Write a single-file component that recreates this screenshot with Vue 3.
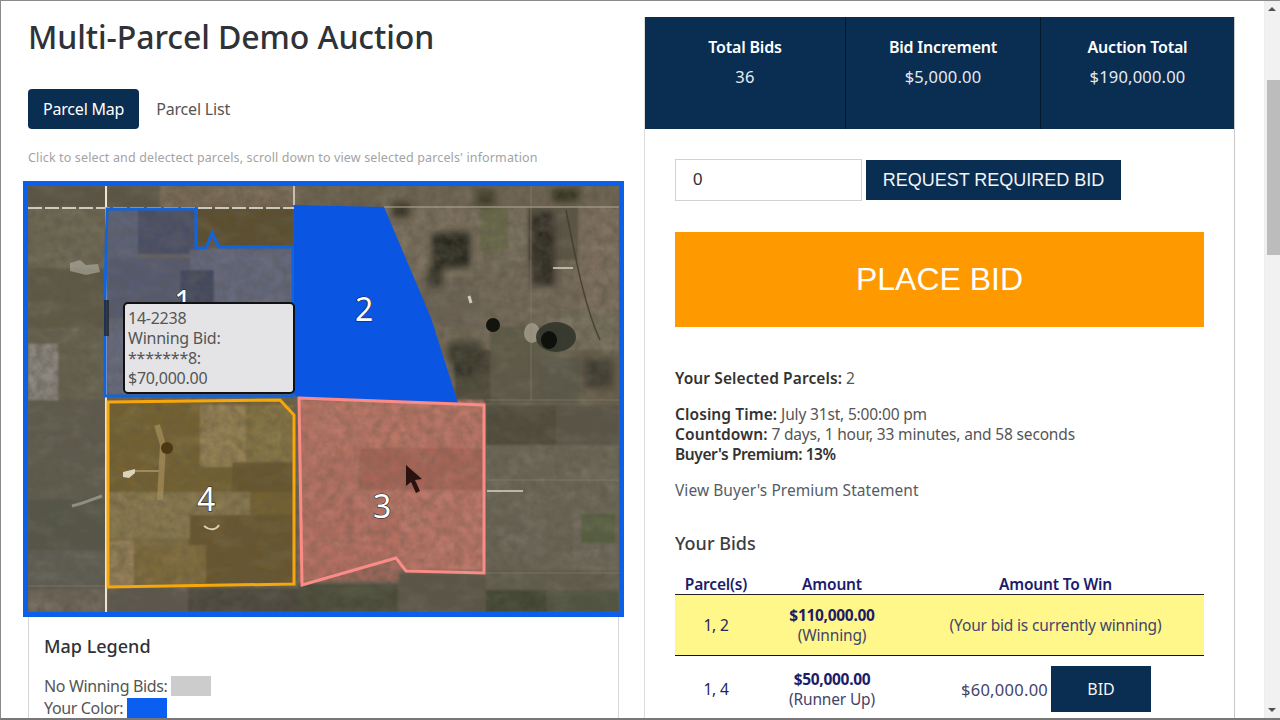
<script setup>
const fields = [
  // left strip
  [28,186,78,21,'#5b5445'],[28,208,78,60,'#6e6753'],[28,268,78,60,'#5f5a45'],[28,328,78,72,'#66624f'],
  [28,344,30,56,'#8b8780'],[28,400,78,100,'#5e5b4f'],[28,500,78,50,'#55564a'],[28,550,78,40,'#615e54'],[28,590,78,22,'#6d6559'],
  // top strip
  [108,186,88,21,'#5c5444'],[160,186,134,21,'#7a6b55'],[296,186,90,19,'#6d6350'],
  // parcel 1 notch
  [197,208,97,40,'#5b4f2f'],
  // below parcel row
  [108,588,80,24,'#5d5850'],[188,588,110,24,'#4b473c'],[298,584,100,28,'#4a4c38'],[398,574,90,38,'#5c5648'],
  // top right
  [384,186,235,21,'#6f6552'],[384,207,100,70,'#7c6f5e'],[480,207,28,44,'#6a6a4c'],[508,207,20,60,'#7a7060'],[528,207,50,70,'#5b5544'],[578,207,41,120,'#7f705f'],
  [400,277,80,50,'#6d6454'],[480,260,100,66,'#756b5a'],[430,327,60,60,'#766c5a'],[490,327,70,30,'#605c48'],[560,310,59,40,'#786f5e'],
  [490,357,50,46,'#5f5a49'],[540,357,40,46,'#5c5a4c'],[580,350,39,53,'#6a604e'],[455,350,35,53,'#4f4c3b'],
  // bottom right
  [486,405,70,40,'#4f4b3b'],[556,405,63,40,'#5a5446'],[486,445,133,70,'#6c6759'],[486,515,50,55,'#6a6557'],
  [536,515,45,55,'#6d6658'],[581,514,34,29,'#56603f'],[581,543,38,27,'#6f6a5c'],[486,570,133,42,'#635f4f'],[486,590,60,22,'#3f4433'],[546,590,73,22,'#50533f']
]
const parcel4 = [
  [108,402,186,184,'#6a5c36'],[200,405,46,62,'#8c7d5a'],[246,405,48,70,'#7d7048'],[108,492,142,46,'#7f7554'],[108,538,80,16,'#736a49'],
  [190,515,104,70,'#5c5030'],[108,541,26,45,'#8c7c5e'],[136,545,70,40,'#75663f'],[232,462,62,30,'#5c5030']
]
const parcel3 = [
  [299,400,185,60,'#a87060'],[299,455,60,60,'#a06b5c'],[360,448,124,45,'#925c4f'],[359,490,125,80,'#a87063'],[299,515,100,66,'#a2695c']
]
const parcel1 = [
  [108,209,30,60,'#5c6272'],[138,209,58,45,'#3f4556'],[108,258,90,60,'#525766'],[190,250,104,80,'#686b78'],[180,270,34,34,'#343a4a'],[108,320,20,74,'#6a6d79']
]
const dark = [
  [432,232,38,36,'#26251b'],[428,268,14,18,'#2f2d22'],[531,212,24,74,'#2d2b20'],[448,340,34,24,'#3a382b'],
  [454,360,22,16,'#33312a'],[552,188,28,14,'#33301f'],[392,203,18,14,'#2f2c1f'],[475,190,20,16,'#3a3727'],
  [462,352,26,18,'#3a382c'],[583,358,30,30,'#3f3c30']
]
</script>

<template>
  <div class="window">
    <main class="page">
      <section class="left">
        <h1 class="title">Multi-Parcel Demo Auction</h1>
        <nav class="tabs">
          <a class="tab active">Parcel Map</a>
          <a class="tab">Parcel List</a>
        </nav>
        <p class="hint">Click to select and delectect parcels, scroll down to view selected parcels' information</p>
        <div class="map">
          <svg class="map-svg" viewBox="28 186 591 426" width="591" height="426" xmlns="http://www.w3.org/2000/svg">
            <defs>
              <filter id="soft"><feGaussianBlur stdDeviation="1.2" /></filter>
              <filter id="blotch"><feGaussianBlur stdDeviation="3.5" /></filter>
              <filter id="grain" x="0" y="0" width="100%" height="100%">
                <feTurbulence type="fractalNoise" baseFrequency="0.11" numOctaves="4" seed="7" />
                <feColorMatrix type="matrix" values="0 0 0 0 0.1  0 0 0 0 0.09  0 0 0 0 0.06  0.9 0.9 0 0 -0.6" />
              </filter>
              <filter id="grain2" x="0" y="0" width="100%" height="100%">
                <feTurbulence type="fractalNoise" baseFrequency="0.035 0.06" numOctaves="3" seed="21" />
                <feColorMatrix type="matrix" values="0 0 0 0 0.85  0 0 0 0 0.8  0 0 0 0 0.7  1.1 0 0 0 -0.5" />
              </filter>
            </defs>
            <rect x="28" y="186" width="591" height="426" fill="#6c6452" />
            <g filter="url(#soft)">
              <rect v-for="(f, i) in fields" :key="'f' + i" :x="f[0]" :y="f[1]" :width="f[2]" :height="f[3]" :fill="f[4]" />
              <rect v-for="(f, i) in parcel4" :key="'p4' + i" :x="f[0]" :y="f[1]" :width="f[2]" :height="f[3]" :fill="f[4]" />
              <rect v-for="(f, i) in parcel3" :key="'p3' + i" :x="f[0]" :y="f[1]" :width="f[2]" :height="f[3]" :fill="f[4]" />
              <rect v-for="(f, i) in parcel1" :key="'p1' + i" :x="f[0]" :y="f[1]" :width="f[2]" :height="f[3]" :fill="f[4]" />
            </g>
            <g filter="url(#blotch)">
              <rect v-for="(f, i) in dark" :key="'d' + i" :x="f[0]" :y="f[1]" :width="f[2]" :height="f[3]" :fill="f[4]" />
            </g>
            <rect x="28" y="186" width="591" height="426" filter="url(#grain2)" opacity="0.2" />
            <rect x="28" y="186" width="591" height="426" filter="url(#grain)" opacity="0.75" />

            <!-- ponds and farmyards -->
            <ellipse cx="532" cy="333" rx="8" ry="10" fill="#a89f8c" opacity="0.8" />
            <ellipse cx="556" cy="337" rx="20" ry="15" fill="#33352b" opacity="0.9" />
            <ellipse cx="493" cy="325" rx="7" ry="7" fill="#14140e" />
            <ellipse cx="549" cy="340" rx="8" ry="9" fill="#0e100c" />
            <path d="M70 263l10-3 6 5 12-1 2 8-14 3-16-4z" fill="#c4c1b6" opacity="0.5" />
            <path d="M123 472l12-3v4l-6 5-6-1z" fill="#e0ddd2" opacity="0.95" />
            <path d="M135 471h24" stroke="#a39877" stroke-width="1.5" />
            <path d="M157 425l6 20-3 55" stroke="#a8946a" stroke-width="6" fill="none" opacity="0.6" />
            <ellipse cx="167" cy="448" rx="6" ry="6" fill="#3f3014" />
            <path d="M72 506c10-2 24-8 30-10" stroke="#a8a594" stroke-width="3" fill="none" opacity="0.7" />
            <path d="M204 526c6 5 12 4 15-1" stroke="#d8d2bd" stroke-width="2" fill="none" />
            <path d="M28 586H105M486 573H619M486 400H619M531 186V400M486 480H619" stroke="#8b8474" stroke-width="1" fill="none" opacity="0.55" />
            <path d="M384 207H619" stroke="#a79f8d" stroke-width="1.5" opacity="0.8" />
            <path d="M566 210c8 40 18 96 34 130" stroke="#3f3a2b" stroke-width="1.5" fill="none" opacity="0.8" />
            <path d="M487 491h36M553 268h20" stroke="#d5d2c6" stroke-width="2" fill="none" opacity="0.75" />
            <path d="M469 296l2 7" stroke="#e8e4d8" stroke-width="3" opacity="0.8" />

            <!-- roads -->
            <path d="M106 186V612" stroke="#efe2d2" stroke-width="2" />
            <path d="M294 186V205" stroke="#e0dbcf" stroke-width="1.5" />
            <path d="M28 208H294" stroke="#e0dccf" stroke-width="2" stroke-dasharray="14 3" opacity="0.85" />

            <!-- parcels -->
            <path d="M107 209H196V248H206L212 233L219 247H293V396H105V300Z" fill="#5c6488" fill-opacity="0.3" stroke="#1264dd" stroke-width="3" stroke-linejoin="miter" />
            <path d="M294 205L384 207L431 318L458 403L298 398L294 394Z" fill="#0b55e3" />
            <path d="M108 402L280 400L294 415V584L108 587Z" fill="#ffa500" fill-opacity="0.07" stroke="#f7a70a" stroke-width="3" />
            <path d="M299 398L484 405V573L406 571L396 558L302 585Z" fill="#ff8678" fill-opacity="0.2" stroke="#fb8b86" stroke-width="3" />

            <rect x="104" y="300" width="5" height="36" fill="#22262e" opacity="0.8" />

            <!-- parcel numbers -->
            <g class="labels">
              <text x="183" y="314">1</text>
              <text x="364" y="321">2</text>
              <text x="382" y="518">3</text>
              <text x="206" y="511">4</text>
            </g>

            <!-- pointer -->
            <path d="M406 465L406 486L411 482L416 493L420 491L415 480L422 479Z" fill="#2a130e" />
          </svg>
          <div class="tooltip">14-2238<br />Winning Bid:<br />*******8:<br />$70,000.00</div>
        </div>
        <section class="legend">
          <h3 class="legend-title">Map Legend</h3>
          <div class="legend-row">No Winning Bids: <span class="swatch grey"></span></div>
          <div class="legend-row">Your Color: <span class="swatch blue"></span></div>
        </section>
      </section>

      <section class="right">
        <div class="stats">
          <div class="stat w1"><strong>Total Bids</strong><span>36</span></div>
          <div class="stat w2"><strong>Bid Increment</strong><span>$5,000.00</span></div>
          <div class="stat w3"><strong>Auction Total</strong><span>$190,000.00</span></div>
        </div>
        <div class="body">
          <div class="request">
            <div class="input">0</div>
            <button class="req-btn">REQUEST REQUIRED BID</button>
          </div>
          <button class="place">PLACE BID</button>
          <p class="selected"><b>Your Selected Parcels:</b> 2</p>
          <p class="info">
            <b>Closing Time:</b> July 31st, 5:00:00 pm<br />
            <b>Countdown:</b> 7 days, 1 hour, 33 minutes, and 58 seconds<br />
            <b class="premium">Buyer's Premium: 13%</b>
          </p>
          <a class="statement">View Buyer's Premium Statement</a>
          <h3 class="bids-title">Your Bids</h3>
          <div class="bids">
            <div class="bid-row head">
              <div>Parcel(s)</div><div>Amount</div><div>Amount To Win</div>
            </div>
            <div class="bid-row winning">
              <div>1, 2</div>
              <div class="amount"><b>$110,000.00</b><span>(Winning)</span></div>
              <div class="plain">(Your bid is currently winning)</div>
            </div>
            <div class="bid-row runner">
              <div>1, 4</div>
              <div class="amount"><b>$50,000.00</b><span>(Runner Up)</span></div>
              <div class="towin"><span>$60,000.00</span><button class="bid-btn">BID</button></div>
            </div>
          </div>
        </div>
      </section>
    </main>
    <aside class="scrollbar">
      <span class="arrow up"></span>
      <span class="thumb"></span>
      <span class="arrow down"></span>
    </aside>
  </div>
</template>

<style>
html, body { margin: 0; background: #fff; overflow: hidden; }
</style>

<style scoped>
.window {
  width: 1280px;
  height: 720px;
  box-sizing: border-box;
  display: flex;
  overflow: hidden;
  background: #fff;
  border-top: 1px solid #8a8a8a;
  border-bottom: 2px solid #777;
  border-left: 1px solid #8a8a8a;
  font-family: "Noto Sans", "Open Sans", sans-serif;
  color: #555;
  font-size: 15.5px;
  letter-spacing: -0.17px;
}
.page {
  flex: 1;
  min-width: 0;
  display: flex;
  align-items: flex-start;
  height: 717px;
  overflow: hidden;
}
.left {
  width: 643px;
  flex: none;
  padding: 0 0 0 27px;
  box-sizing: border-box;
}
.title {
  margin: 16px 0 0;
  font-size: 32px;
  line-height: 40px;
  font-weight: 500;
  color: #2f3237;
  letter-spacing: -0.08px;
}
.tabs {
  display: flex;
  margin-top: 32px;
  gap: 2px;
}
.tab {
  padding: 0 15px;
  height: 40px;
  display: flex;
  align-items: center;
  font-size: 16px;
  border-radius: 4px;
  color: #555;
  letter-spacing: -0.2px;
}
.tab.active {
  background: #0a2d52;
  color: #fff;
}
.hint {
  margin: 20px 0 0;
  font-size: 12.5px;
  line-height: 18px;
  color: #a3a3a3;
  letter-spacing: 0.14px;
}
.map {
  position: relative;
  margin: 14px 0 0 -5px;
  width: 591px;
  height: 426px;
  border: 5px solid #0b5fe8;
}
.map-svg {
  display: block;
}
.labels text {
  font-family: "Noto Sans", sans-serif;
  font-size: 32px;
  fill: #fff;
  text-anchor: middle;
  stroke: #222;
  stroke-width: 1.2px;
  paint-order: stroke;
}
.tooltip {
  position: absolute;
  left: 95px;
  top: 116px;
  width: 172px;
  height: 92px;
  box-sizing: border-box;
  padding: 4px 3px;
  background: #e4e4e6;
  border: 2px solid #111;
  border-radius: 5px;
  font-size: 16px;
  line-height: 20px;
  color: #555;
  letter-spacing: -0.25px;
}
.legend {
  width: 591px;
  height: 110px;
  box-sizing: border-box;
  padding: 16px 15px;
  border: 1px solid #d6d6dc;
  border-top: none;
}
.legend-title {
  margin: 0;
  font-size: 18px;
  line-height: 26px;
  font-weight: 500;
  color: #2f3237;
  letter-spacing: 0;
}
.legend-row {
  display: flex;
  align-items: center;
  gap: 3px;
  height: 22px;
  font-size: 16px;
  color: #555;
  letter-spacing: -0.35px;
}
.legend-row:first-of-type {
  margin-top: 16px;
}
.swatch {
  width: 40px;
  height: 20px;
}
.grey { background: #cccccc; }
.blue { background: #0a5ff0; margin-left: 1px; }

.right {
  width: 591px;
  flex: none;
  box-sizing: border-box;
  margin-top: 16px;
  height: 701px;
  border-right: 1px solid #c9c9c9;
  border-left: 1px solid #dcdcdc;
}
.stats {
  display: flex;
  height: 112px;
  background: #0a2d52;
  color: #fff;
}
.stat {
  display: flex;
  flex-direction: column;
  align-items: center;
  padding-top: 20px;
  box-sizing: border-box;
  line-height: 20px;
  gap: 10px;
  color: #e6ebf0;
}
.stat strong {
  font-size: 16px;
  font-weight: 600;
  color: #fff;
  letter-spacing: -0.2px;
}
.stat span {
  font-size: 16.5px;
  letter-spacing: 0.2px;
}
.w1, .w2 { border-right: 1px solid #04182e; }
.w1 { width: 201px; }
.w2 { width: 195px; }
.w3 { flex: 1; }
.body {
  padding: 30px 30px 0;
}
.request {
  display: flex;
  align-items: center;
  gap: 4px;
}
.input {
  width: 187px;
  height: 42px;
  box-sizing: border-box;
  border: 1px solid #d2d2d2;
  padding-left: 17px;
  display: flex;
  align-items: center;
  font-family: "Liberation Sans", Arial, sans-serif;
  font-size: 17px;
  color: #333;
  letter-spacing: 0;
}
.req-btn {
  width: 255px;
  height: 40px;
  border: 0;
  padding: 0;
  background: #0a2d52;
  color: #f2f4f6;
  font-family: "Liberation Sans", Arial, sans-serif;
  font-size: 18px;
}
.place {
  display: block;
  width: 100%;
  height: 95px;
  margin-top: 31px;
  border: 0;
  background: #ff9900;
  color: #fff;
  font-family: "Liberation Sans", Arial, sans-serif;
  font-size: 32px;
}
.selected {
  margin: 41px 0 0;
  line-height: 20px;
}
.info {
  margin: 16px 0 0;
  line-height: 20px;
}
.selected b, .info b {
  font-weight: 600;
  color: #333;
  letter-spacing: 0.1px;
}
.info .premium {
  letter-spacing: -0.4px;
}
.statement {
  display: block;
  margin-top: 16px;
  line-height: 20px;
  letter-spacing: 0.05px;
  color: #555c66;
}
.bids-title {
  margin: 30px 0 0;
  font-size: 18px;
  line-height: 26px;
  font-weight: 500;
  color: #3a3d42;
  letter-spacing: 0;
}
.bids {
  margin-top: 18px;
}
.bid-row {
  display: grid;
  grid-template-columns: 82px 150px 1fr;
  text-align: center;
  align-items: center;
  color: #23235f;
}
.head {
  height: 18px;
  font-weight: 600;
  line-height: 18px;
  color: #1c1c6b;
  border-bottom: 1px solid #222;
  padding: 1px 0 1px;
}
.winning {
  height: 60px;
  background: #fff78a;
  border-bottom: 1px solid #111;
}
.runner {
  height: 66px;
}
.amount {
  display: flex;
  flex-direction: column;
  line-height: 20px;
}
.amount b { font-weight: 700; color: #1c1c6b; letter-spacing: -0.3px; }
.amount span { color: #44446a; }
.plain { color: #44446a; }
.towin {
  display: flex;
  align-items: center;
  justify-content: flex-start;
  gap: 3px;
  padding-left: 54px;
}
.towin span { font-size: 16.5px; color: #44446a; letter-spacing: 0.27px; }
.bid-btn {
  width: 100px;
  height: 46px;
  border: 0;
  background: #0a2d52;
  color: #f2f4f6;
  font-family: "Noto Sans", sans-serif;
  font-size: 16px;
}
.scrollbar {
  position: relative;
  width: 15px;
  flex: none;
  background: #f1f1f1;
  border-left: 1px solid #ededed;
}
.thumb {
  position: absolute;
  left: 2px;
  right: 0;
  top: 79px;
  height: 175px;
  background: #bcbcbc;
}
.arrow {
  position: absolute;
  left: 3px;
  width: 0;
  height: 0;
  border-left: 4px solid transparent;
  border-right: 4px solid transparent;
}
.arrow.up {
  top: 6px;
  border-bottom: 4px solid #505050;
}
.arrow.down {
  bottom: 6px;
  border-top: 4px solid #505050;
}
</style>
